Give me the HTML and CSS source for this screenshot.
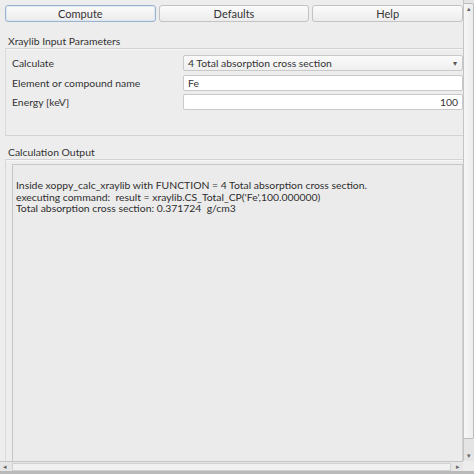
FILE: index.html
```html
<!DOCTYPE html>
<html lang="en">
<head>
    <meta charset="UTF-8">
    <title>Xraylib</title>
    <link rel="stylesheet" href="styles.css">
</head>
<body>
    <div class="window">
        <div class="content">
            <div class="toolbar">
                <div class="btn focused">Compute</div>
                <div class="btn">Defaults</div>
                <div class="btn">Help</div>
            </div>

            <div class="group-title first">Xraylib Input Parameters</div>
            <div class="group params">
                <div class="row">
                    <span class="label">Calculate</span>
                    <div class="combo">4 Total absorption cross section<span class="arrow">&#9662;</span></div>
                </div>
                <div class="row">
                    <span class="label">Element or compound name</span>
                    <div class="field">Fe</div>
                </div>
                <div class="row">
                    <span class="label">Energy [keV]</span>
                    <div class="field num">100</div>
                </div>
            </div>

            <div class="group-title second">Calculation Output</div>
            <div class="group output">
                <div class="textarea">
                    <p>Inside xoppy_calc_xraylib with FUNCTION = 4 Total absorption cross section.</p>
                    <p>executing command:&nbsp; result = xraylib.CS_Total_CP('Fe',100.000000)</p>
                    <p>Total absorption cross section: 0.371724&nbsp; g/cm3</p>
                </div>
            </div>
        </div>

        <div class="vscroll">
            <div class="vhandle"><span class="up">&#9652;</span></div>
            <span class="down">&#9662;</span>
        </div>

        <div class="hscroll">
            <span class="left">&#9666;</span>
            <div class="htrack"></div>
            <span class="right">&#9656;</span>
        </div>
        <div class="corner"></div>
        <div class="bottom-edge"></div>
    </div>
</body>
</html>
```

FILE: styles.css
```css
body {
    margin: 0;
    padding: 0;
    background-color: #ededed;
    font-family: Lato, "Open Sans", sans-serif;
    font-size: 10.4px;
    color: #333;
}
.window {
    width: 474px;
    height: 474px;
    display: grid;
    grid-template-columns: 463px 11px;
    grid-template-rows: 461px 10px 3px;
    overflow: hidden;
}
.content {
    overflow: hidden;
    padding-left: 5px;
}
.toolbar {
    display: flex;
    gap: 3px;
    margin-top: 5px;
}
.btn {
    flex: 1;
    height: 15px;
    line-height: 15px;
    text-align: center;
    background: linear-gradient(#fbfbfb, #ececec);
    border: 1px solid #c3c3c3;
    border-radius: 3px;
    font-size: 11px;
}
.btn.focused {
    border-color: #9ab3cf;
    box-shadow: inset 0 0 0 1px #dde8f3;
}
.group-title {
    padding-left: 3px;
    height: 14px;
    line-height: 14px;
}
.group-title.first {
    margin-top: 12px;
}
.group-title.second {
    margin-top: 9px;
}
.group {
    border-top: 1px solid #d2d2d2;
    border-left: 1px solid #d9d9d9;
    box-shadow: inset 0 1px 0 #f6f6f6;
}
.params {
    height: 80px;
    padding: 6px 0 0 6px;
    border-bottom: 1px solid #d2d2d2;
}
.row {
    display: flex;
    align-items: center;
    height: 16px;
    margin-bottom: 3.5px;
}
.label {
    width: 171px;
}
.combo, .field {
    flex: 1;
    height: 14px;
    line-height: 14px;
    padding: 0 4px;
    border: 1px solid #c9c9c9;
    border-radius: 2px;
    background: #fff;
    display: flex;
    justify-content: space-between;
}
.combo {
    background: linear-gradient(#fafafa, #efefef);
}
.arrow {
    font-size: 8px;
    color: #555;
    padding-right: 1px;
}
.num {
    justify-content: flex-end;
}
.output {
    height: 400px;
    padding: 4px 0 0 6px;
}
.textarea {
    height: 380px;
    border: 1px solid #c6c6c6;
    border-right-color: #d0d0d0;
    background: #ebebeb;
    padding: 15px 3px 0;
    color: #2e2e2e;
}
.textarea p {
    margin: 0;
    line-height: 11.7px;
    white-space: nowrap;
}
.vscroll {
    border-left: 1px solid #c4c4c4;
    background: #e4e4e4;
    display: flex;
    flex-direction: column;
    justify-content: space-between;
}
.vhandle {
    height: 434px;
    margin-top: 3px;
    background: linear-gradient(90deg, #f7f7f7, #ececec);
    border: 1px solid #bcbcbc;
    border-left: none;
    border-radius: 0 2px 2px 0;
    text-align: center;
}
.up, .down {
    font-size: 7px;
    color: #666;
    display: block;
    text-align: center;
    line-height: 8px;
}
.down {
    margin-bottom: 2px;
}
.hscroll {
    display: flex;
    align-items: center;
    background: #e6e6e6;
    border-top: 1px solid #c4c4c4;
}
.left, .right {
    font-size: 7px;
    color: #666;
    width: 10px;
    text-align: center;
}
.htrack {
    flex: 1;
    height: 6px;
    margin: 0 2px;
    background: #f1f1f1;
    border: 1px solid #d0d0d0;
}
.corner {
    background: #ececec;
}
.bottom-edge {
    grid-column: 1 / 3;
    background: #b9b9b9;
}
```
